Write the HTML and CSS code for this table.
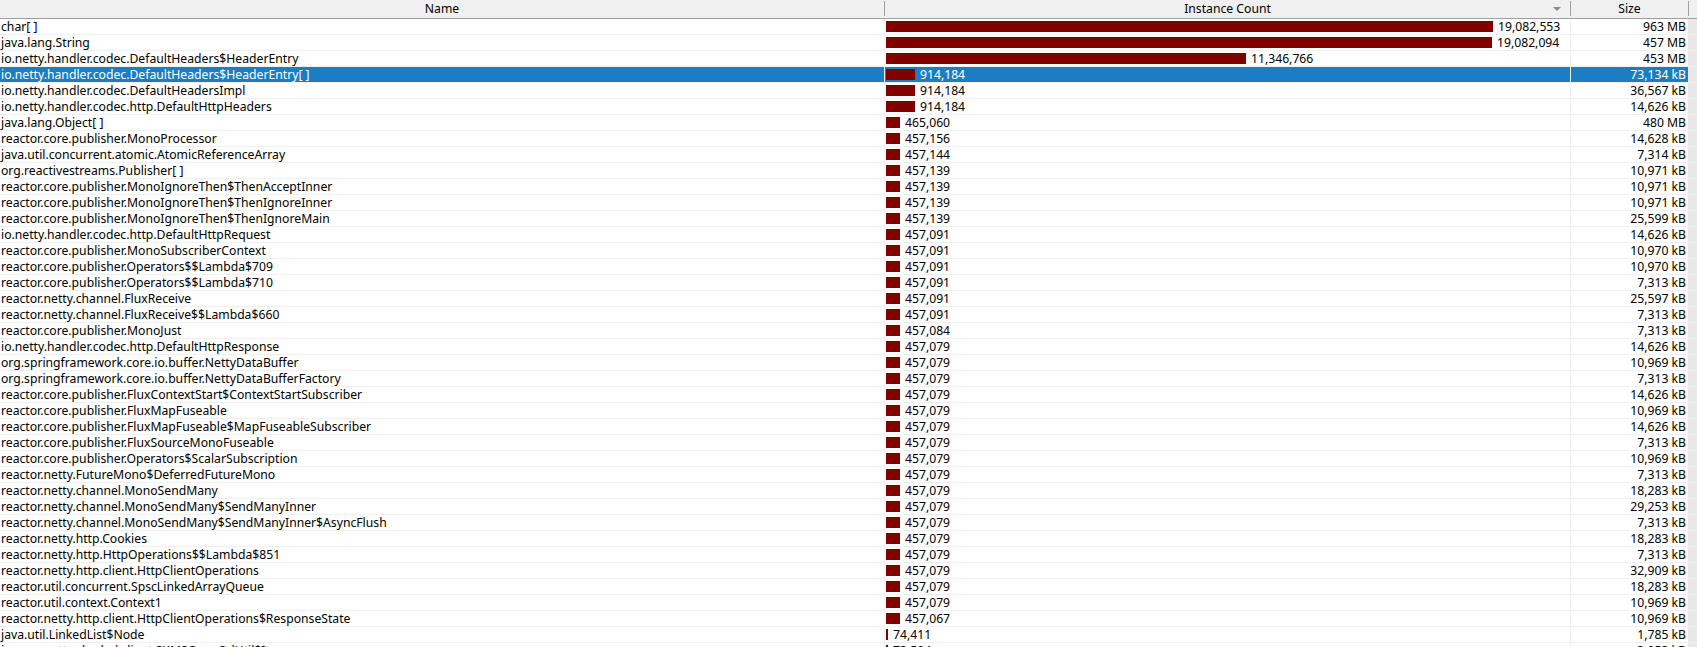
FILE: index.html
```html
<!DOCTYPE html>
<html>
<head>
<meta charset="utf-8">
<title>Heap</title>
<link rel="stylesheet" href="styles.css">
</head>
<body>
<div class="table">
  <div class="row header">
    <div class="th">Name</div>
    <div class="th count-h">Instance Count<span class="sort"></span></div>
    <div class="th size-h">Size</div>
    <div class="gutter-h"></div>
  </div>
  <div class="tbody">
    <div class="row"><div class="name">char[ ]</div><div class="count"><span class="bar" style="width:607px"></span><span class="num">19,082,553</span></div><div class="size">963 MB</div><div class="gutter"></div></div>
    <div class="row"><div class="name">java.lang.String</div><div class="count"><span class="bar" style="width:606px"></span><span class="num">19,082,094</span></div><div class="size">457 MB</div><div class="gutter"></div></div>
    <div class="row"><div class="name">io.netty.handler.codec.DefaultHeaders$HeaderEntry</div><div class="count"><span class="bar" style="width:360px"></span><span class="num">11,346,766</span></div><div class="size">453 MB</div><div class="gutter"></div></div>
    <div class="row selected"><div class="name">io.netty.handler.codec.DefaultHeaders$HeaderEntry[ ]</div><div class="count"><span class="bar" style="width:29px"></span><span class="num">914,184</span></div><div class="size">73,134 kB</div><div class="gutter"></div></div>
    <div class="row"><div class="name">io.netty.handler.codec.DefaultHeadersImpl</div><div class="count"><span class="bar" style="width:29px"></span><span class="num">914,184</span></div><div class="size">36,567 kB</div><div class="gutter"></div></div>
    <div class="row"><div class="name">io.netty.handler.codec.http.DefaultHttpHeaders</div><div class="count"><span class="bar" style="width:29px"></span><span class="num">914,184</span></div><div class="size">14,626 kB</div><div class="gutter"></div></div>
    <div class="row"><div class="name">java.lang.Object[ ]</div><div class="count"><span class="bar" style="width:14px"></span><span class="num">465,060</span></div><div class="size">480 MB</div><div class="gutter"></div></div>
    <div class="row"><div class="name">reactor.core.publisher.MonoProcessor</div><div class="count"><span class="bar" style="width:14px"></span><span class="num">457,156</span></div><div class="size">14,628 kB</div><div class="gutter"></div></div>
    <div class="row"><div class="name">java.util.concurrent.atomic.AtomicReferenceArray</div><div class="count"><span class="bar" style="width:14px"></span><span class="num">457,144</span></div><div class="size">7,314 kB</div><div class="gutter"></div></div>
    <div class="row"><div class="name">org.reactivestreams.Publisher[ ]</div><div class="count"><span class="bar" style="width:14px"></span><span class="num">457,139</span></div><div class="size">10,971 kB</div><div class="gutter"></div></div>
    <div class="row"><div class="name">reactor.core.publisher.MonoIgnoreThen$ThenAcceptInner</div><div class="count"><span class="bar" style="width:14px"></span><span class="num">457,139</span></div><div class="size">10,971 kB</div><div class="gutter"></div></div>
    <div class="row"><div class="name">reactor.core.publisher.MonoIgnoreThen$ThenIgnoreInner</div><div class="count"><span class="bar" style="width:14px"></span><span class="num">457,139</span></div><div class="size">10,971 kB</div><div class="gutter"></div></div>
    <div class="row"><div class="name">reactor.core.publisher.MonoIgnoreThen$ThenIgnoreMain</div><div class="count"><span class="bar" style="width:14px"></span><span class="num">457,139</span></div><div class="size">25,599 kB</div><div class="gutter"></div></div>
    <div class="row"><div class="name">io.netty.handler.codec.http.DefaultHttpRequest</div><div class="count"><span class="bar" style="width:14px"></span><span class="num">457,091</span></div><div class="size">14,626 kB</div><div class="gutter"></div></div>
    <div class="row"><div class="name">reactor.core.publisher.MonoSubscriberContext</div><div class="count"><span class="bar" style="width:14px"></span><span class="num">457,091</span></div><div class="size">10,970 kB</div><div class="gutter"></div></div>
    <div class="row"><div class="name">reactor.core.publisher.Operators$$Lambda$709</div><div class="count"><span class="bar" style="width:14px"></span><span class="num">457,091</span></div><div class="size">10,970 kB</div><div class="gutter"></div></div>
    <div class="row"><div class="name">reactor.core.publisher.Operators$$Lambda$710</div><div class="count"><span class="bar" style="width:14px"></span><span class="num">457,091</span></div><div class="size">7,313 kB</div><div class="gutter"></div></div>
    <div class="row"><div class="name">reactor.netty.channel.FluxReceive</div><div class="count"><span class="bar" style="width:14px"></span><span class="num">457,091</span></div><div class="size">25,597 kB</div><div class="gutter"></div></div>
    <div class="row"><div class="name">reactor.netty.channel.FluxReceive$$Lambda$660</div><div class="count"><span class="bar" style="width:14px"></span><span class="num">457,091</span></div><div class="size">7,313 kB</div><div class="gutter"></div></div>
    <div class="row"><div class="name">reactor.core.publisher.MonoJust</div><div class="count"><span class="bar" style="width:14px"></span><span class="num">457,084</span></div><div class="size">7,313 kB</div><div class="gutter"></div></div>
    <div class="row"><div class="name">io.netty.handler.codec.http.DefaultHttpResponse</div><div class="count"><span class="bar" style="width:14px"></span><span class="num">457,079</span></div><div class="size">14,626 kB</div><div class="gutter"></div></div>
    <div class="row"><div class="name">org.springframework.core.io.buffer.NettyDataBuffer</div><div class="count"><span class="bar" style="width:14px"></span><span class="num">457,079</span></div><div class="size">10,969 kB</div><div class="gutter"></div></div>
    <div class="row"><div class="name">org.springframework.core.io.buffer.NettyDataBufferFactory</div><div class="count"><span class="bar" style="width:14px"></span><span class="num">457,079</span></div><div class="size">7,313 kB</div><div class="gutter"></div></div>
    <div class="row"><div class="name">reactor.core.publisher.FluxContextStart$ContextStartSubscriber</div><div class="count"><span class="bar" style="width:14px"></span><span class="num">457,079</span></div><div class="size">14,626 kB</div><div class="gutter"></div></div>
    <div class="row"><div class="name">reactor.core.publisher.FluxMapFuseable</div><div class="count"><span class="bar" style="width:14px"></span><span class="num">457,079</span></div><div class="size">10,969 kB</div><div class="gutter"></div></div>
    <div class="row"><div class="name">reactor.core.publisher.FluxMapFuseable$MapFuseableSubscriber</div><div class="count"><span class="bar" style="width:14px"></span><span class="num">457,079</span></div><div class="size">14,626 kB</div><div class="gutter"></div></div>
    <div class="row"><div class="name">reactor.core.publisher.FluxSourceMonoFuseable</div><div class="count"><span class="bar" style="width:14px"></span><span class="num">457,079</span></div><div class="size">7,313 kB</div><div class="gutter"></div></div>
    <div class="row"><div class="name">reactor.core.publisher.Operators$ScalarSubscription</div><div class="count"><span class="bar" style="width:14px"></span><span class="num">457,079</span></div><div class="size">10,969 kB</div><div class="gutter"></div></div>
    <div class="row"><div class="name">reactor.netty.FutureMono$DeferredFutureMono</div><div class="count"><span class="bar" style="width:14px"></span><span class="num">457,079</span></div><div class="size">7,313 kB</div><div class="gutter"></div></div>
    <div class="row"><div class="name">reactor.netty.channel.MonoSendMany</div><div class="count"><span class="bar" style="width:14px"></span><span class="num">457,079</span></div><div class="size">18,283 kB</div><div class="gutter"></div></div>
    <div class="row"><div class="name">reactor.netty.channel.MonoSendMany$SendManyInner</div><div class="count"><span class="bar" style="width:14px"></span><span class="num">457,079</span></div><div class="size">29,253 kB</div><div class="gutter"></div></div>
    <div class="row"><div class="name">reactor.netty.channel.MonoSendMany$SendManyInner$AsyncFlush</div><div class="count"><span class="bar" style="width:14px"></span><span class="num">457,079</span></div><div class="size">7,313 kB</div><div class="gutter"></div></div>
    <div class="row"><div class="name">reactor.netty.http.Cookies</div><div class="count"><span class="bar" style="width:14px"></span><span class="num">457,079</span></div><div class="size">18,283 kB</div><div class="gutter"></div></div>
    <div class="row"><div class="name">reactor.netty.http.HttpOperations$$Lambda$851</div><div class="count"><span class="bar" style="width:14px"></span><span class="num">457,079</span></div><div class="size">7,313 kB</div><div class="gutter"></div></div>
    <div class="row"><div class="name">reactor.netty.http.client.HttpClientOperations</div><div class="count"><span class="bar" style="width:14px"></span><span class="num">457,079</span></div><div class="size">32,909 kB</div><div class="gutter"></div></div>
    <div class="row"><div class="name">reactor.util.concurrent.SpscLinkedArrayQueue</div><div class="count"><span class="bar" style="width:14px"></span><span class="num">457,079</span></div><div class="size">18,283 kB</div><div class="gutter"></div></div>
    <div class="row"><div class="name">reactor.util.context.Context1</div><div class="count"><span class="bar" style="width:14px"></span><span class="num">457,079</span></div><div class="size">10,969 kB</div><div class="gutter"></div></div>
    <div class="row"><div class="name">reactor.netty.http.client.HttpClientOperations$ResponseState</div><div class="count"><span class="bar" style="width:14px"></span><span class="num">457,067</span></div><div class="size">10,969 kB</div><div class="gutter"></div></div>
    <div class="row"><div class="name">java.util.LinkedList$Node</div><div class="count"><span class="bar" style="width:2px"></span><span class="num">74,411</span></div><div class="size">1,785 kB</div><div class="gutter"></div></div>
    <div class="row"><div class="name">io.grpc.netty.shaded.client.SKMSOpenSslUtil$Item</div><div class="count"><span class="bar" style="width:2px"></span><span class="num">73,504</span></div><div class="size">3,053 kB</div><div class="gutter"></div></div>
  </div>
</div>
</body>
</html>
```

FILE: styles.css
```css
html, body {
  margin: 0;
  padding: 0;
  background: #ffffff;
}
body {
  width: 1697px;
  height: 647px;
  overflow: hidden;
  font-family: "Noto Sans", "Open Sans", sans-serif;
  font-size: 12.2px;
  color: #000000;
}
.table {
  display: flex;
  flex-direction: column;
}
.row {
  display: grid;
  grid-template-columns: 884px 686px 118px 9px;
  height: 16px;
  box-sizing: border-box;
  border-bottom: 1px solid #f0f0f0;
  line-height: 15px;
  white-space: nowrap;
}
.header {
  height: 19px;
  background: #f0f0f0;
  border-bottom: 1px solid #a0a0a0;
  line-height: 18px;
}
.th {
  position: relative;
  text-align: center;
  color: #000;
}
.count-h, .size-h {
  border-left: 1px solid transparent;
}
.count-h::before, .size-h::before {
  content: "";
  position: absolute;
  left: -1px;
  top: 1px;
  height: 15px;
  width: 1px;
  background: #a0a0a0;
}
.gutter-h::before {
  content: "";
  display: block;
  width: 1px;
  height: 15px;
  margin-top: 1px;
  background: #a0a0a0;
}
.sort {
  position: absolute;
  right: 9px;
  top: 7px;
  width: 0;
  height: 0;
  border-left: 4px solid transparent;
  border-right: 4px solid transparent;
  border-top: 4px solid #8a8a8a;
}
.name {
  padding-left: 1px;
  overflow: hidden;
}
.count {
  border-left: 1px solid #f0f0f0;
  padding-left: 1px;
  display: flex;
  align-items: center;
  overflow: hidden;
}
.bar {
  display: block;
  height: 11px;
  background: #800000;
  flex: none;
}
.num {
  margin-left: 5px;
}
.size {
  border-left: 1px solid #f0f0f0;
  text-align: right;
  padding-right: 2px;
}
.gutter {
  background: #e8e8e8;
}
.selected {
  background: #1b7dc4;
  color: #ffffff;
}
.selected .gutter {
  background: #e8e8e8;
}
```
